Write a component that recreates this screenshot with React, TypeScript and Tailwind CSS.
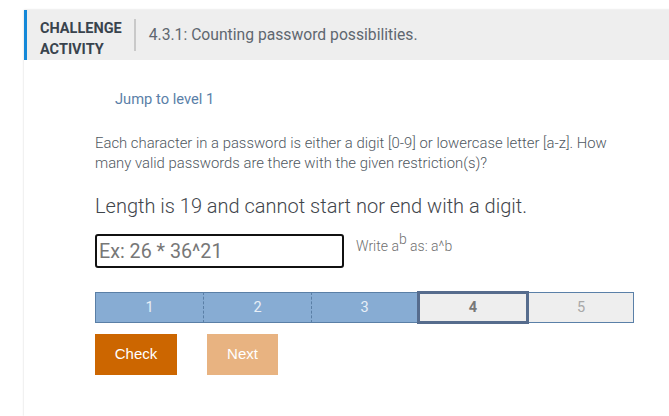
import React from "react";

export default function App() {
  const roboto = { fontFamily: "Roboto, 'Noto Sans', sans-serif" };
  return (
    <div className="w-[669px] h-[416px] overflow-hidden bg-white pt-[10px] pl-[24px]" style={roboto}>
      <div className="h-[406px] w-[700px] bg-white shadow-[0_0_2px_rgba(0,0,0,0.18)]">
        <div className="flex h-[50px] items-center border-l-[3px] border-[#1488d8] bg-[#eeeeee] pl-[13px]">
          <div className="text-[14.5px] font-bold leading-[21px] text-[#39434d] pt-[7px]">
            CHALLENGE
            <br />
            ACTIVITY
          </div>
          <div className="ml-[12px] h-[32px] w-[2px] bg-[#c9c9c9]" />
          <div className="ml-[13px] text-[15.7px] font-normal text-[#5f6770] pb-[1px]">
            4.3.1: Counting password possibilities.
          </div>
        </div>

        <div className="pl-[71px]">
          <div className="mt-[29px] ml-[20px] text-[14.7px] leading-[20px] text-[#5a80a8]">Jump to level 1</div>
          <p className="mt-[24px] w-[530px] text-[14.85px] font-light leading-[20px] text-[#4f5861]">
            Each character in a password is either a digit [0-9] or lowercase letter [a-z]. How many valid passwords are there with the given restriction(s)?
          </p>
          <div className="mt-[19px] text-[20px] font-light leading-[28px] text-[#3f454b]">
            Length is 19 and cannot start nor end with a digit.
          </div>

          <div className="mt-[14px] flex items-start">
            <input
              className="h-[34px] w-[249px] rounded-[3px] border-2 border-[#111111] px-[2px] text-[19.7px] text-[#333] placeholder:text-[#777777] outline-none"
              placeholder="Ex: 26 * 36^21"
              style={roboto}
            />
            <div className="ml-[12px] mt-[2px] text-[14px] font-light text-[#6f6f6f]">
              Write a<sup className="text-[14px]">b</sup> as: a^b
            </div>
          </div>

          <div className="mt-[24px] flex h-[31px] w-[539px] text-[14.5px]">
            <div className="flex w-[108px] items-center justify-center border border-r-0 border-[#5a7fa6] bg-[#87acd3] text-[#e8eff7]">1</div>
            <div className="flex w-[108px] items-center justify-center border-y border-l border-[#5a7fa6] [border-left-style:dashed] bg-[#87acd3] text-[#e8eff7]">2</div>
            <div className="flex w-[106px] items-center justify-center border-y border-l border-[#5a7fa6] [border-left-style:dashed] bg-[#87acd3] text-[#e8eff7]">3</div>
            <div className="-my-px flex w-[112px] items-center justify-center border-[3px] border-[#566c8d] bg-[#eeeeee] font-bold text-[#777777]">4</div>
            <div className="flex w-[105px] items-center justify-center border border-l-0 border-[#5a80a8] bg-[#eeeeee] text-[#a8a8a8]">5</div>
          </div>

          <div className="mt-[11px] flex gap-[30px]" style={{ fontFamily: "'Liberation Sans', Arial, sans-serif" }}>
            <button className="h-[41px] w-[82px] bg-[#cc6600] text-[15px] text-white">Check</button>
            <button className="h-[41px] w-[71px] bg-[#e8b381] text-[15px] text-white">Next</button>
          </div>
        </div>
      </div>
    </div>
  );
}
